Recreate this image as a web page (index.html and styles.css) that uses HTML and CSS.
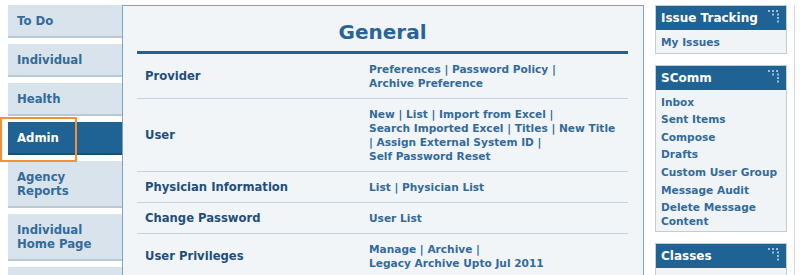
FILE: index.html
```html
<!DOCTYPE html>
<html>
<head>
<meta charset="utf-8">
<link rel="stylesheet" href="styles.css">
</head>
<body>
<div class="page">
  <nav class="nav">
    <div class="tab">To Do</div>
    <div class="tab">Individual</div>
    <div class="tab">Health</div>
    <div class="tab active">Admin</div>
    <div class="tab tall">Agency<br>Reports</div>
    <div class="tab tall">Individual<br>Home Page</div>
    <div class="tab"></div>
    <div class="highlight"></div>
  </nav>
  <main class="main">
    <h1 class="title">General</h1>
    <div class="row">
      <div class="label">Provider</div>
      <div class="links">Preferences | Password Policy |<br>Archive Preference</div>
    </div>
    <div class="row">
      <div class="label">User</div>
      <div class="links">New | List | Import from Excel |<br>Search Imported Excel | Titles | New Title<br>| Assign External System ID |<br>Self Password Reset</div>
    </div>
    <div class="row">
      <div class="label">Physician Information</div>
      <div class="links">List | Physician List</div>
    </div>
    <div class="row">
      <div class="label">Change Password</div>
      <div class="links">User List</div>
    </div>
    <div class="row">
      <div class="label">User Privileges</div>
      <div class="links">Manage | Archive |<br>Legacy Archive Upto Jul 2011</div>
    </div>
  </main>
  <aside class="side">
    <section class="panel">
      <div class="phead"><span>Issue Tracking</span>
        <svg class="grip" width="14" height="14" viewBox="0 0 14 14"><g fill="#9fbfdb"><rect x="1" y="1" width="2" height="2"/><rect x="5" y="1" width="2" height="2"/><rect x="9" y="1" width="2" height="2"/><rect x="5" y="4.5" width="2" height="2"/><rect x="10" y="4.5" width="2" height="2"/><rect x="10" y="8" width="2" height="2"/><rect x="10" y="11.5" width="2" height="2"/></g></svg>
      </div>
      <div class="pbody"><div class="item">My Issues</div></div>
    </section>
    <section class="panel">
      <div class="phead"><span>SComm</span>
        <svg class="grip" width="14" height="14" viewBox="0 0 14 14"><g fill="#9fbfdb"><rect x="1" y="1" width="2" height="2"/><rect x="5" y="1" width="2" height="2"/><rect x="9" y="1" width="2" height="2"/><rect x="5" y="4.5" width="2" height="2"/><rect x="10" y="4.5" width="2" height="2"/><rect x="10" y="8" width="2" height="2"/><rect x="10" y="11.5" width="2" height="2"/></g></svg>
      </div>
      <div class="pbody">
        <div class="item">Inbox</div>
        <div class="item">Sent Items</div>
        <div class="item">Compose</div>
        <div class="item">Drafts</div>
        <div class="item">Custom User Group</div>
        <div class="item">Message Audit</div>
        <div class="item">Delete Message<br>Content</div>
      </div>
    </section>
    <section class="panel">
      <div class="phead"><span>Classes</span>
        <svg class="grip" width="14" height="14" viewBox="0 0 14 14"><g fill="#9fbfdb"><rect x="1" y="1" width="2" height="2"/><rect x="5" y="1" width="2" height="2"/><rect x="9" y="1" width="2" height="2"/><rect x="5" y="4.5" width="2" height="2"/><rect x="10" y="4.5" width="2" height="2"/><rect x="10" y="8" width="2" height="2"/><rect x="10" y="11.5" width="2" height="2"/></g></svg>
      </div>
      <div class="pbody"><div class="item">&nbsp;</div></div>
    </section>
  </aside>
</div>
</body>
</html>
```
FILE: styles.css
```css
* { box-sizing: border-box; }
html, body { margin: 0; padding: 0; background: #ffffff; overflow: hidden; }
body { font-family: "DejaVu Sans", Verdana, sans-serif; font-weight: bold; width: 800px; height: 275px; }
.page { display: flex; align-items: flex-start; padding-top: 5px; height: 275px; overflow: hidden; }
.nav { position: relative; width: 122px; padding-left: 8px; display: flex; flex-direction: column; gap: 6px; flex: none; }
.tab { height: 33px; background: #d9e3eb; border-bottom: 2px solid #b9c9d6; color: #336b9b; font-size: 11.7px; line-height: 14px; padding-left: 9px; display: flex; align-items: center; }
.tab.tall { height: 47px; }
.tab.active { background: #1e6394; border-bottom-color: #164f79; color: #ffffff; }
.highlight { position: absolute; left: 0; top: 112px; width: 77px; height: 45px; border: 2px solid #f3913a; }
.main { flex: none; width: 522px; height: 275px; border: 1px solid #7aa3c6; border-bottom: none; background: #f2f5f8; padding: 0 15px 0 14px; }
.title { margin: 0; text-align: center; font-size: 20px; line-height: 24px; color: #2a6496; padding: 14px 0 7px; border-bottom: 3px solid #23628f; }
.row { display: flex; align-items: center; padding: 8px 0; border-bottom: 1px solid #c6d3de; }
.label { width: 232px; padding-left: 8px; font-size: 11.6px; line-height: 14px; color: #1f4f7a; flex: none; }
.links { font-size: 10.6px; line-height: 14px; color: #336b9b; }
.side { flex: none; width: 151px; height: 275px; padding-left: 11px; border-right: 1px solid #d3dbe2; display: flex; flex-direction: column; gap: 11px; }
.panel { width: 132px; border: 1px solid #c0cdd8; background: #f1f4f7; flex: none; }
.phead { height: 24px; background: #1e6394; color: #ffffff; font-size: 12px; padding: 0 5px 0 5px; display: flex; align-items: center; justify-content: space-between; }
.grip { margin-top: -4px; }
.pbody { padding: 4px 5px 1px; }
.item { font-size: 10.6px; line-height: 13.6px; padding: 2px 0; color: #336b9b; }
```
